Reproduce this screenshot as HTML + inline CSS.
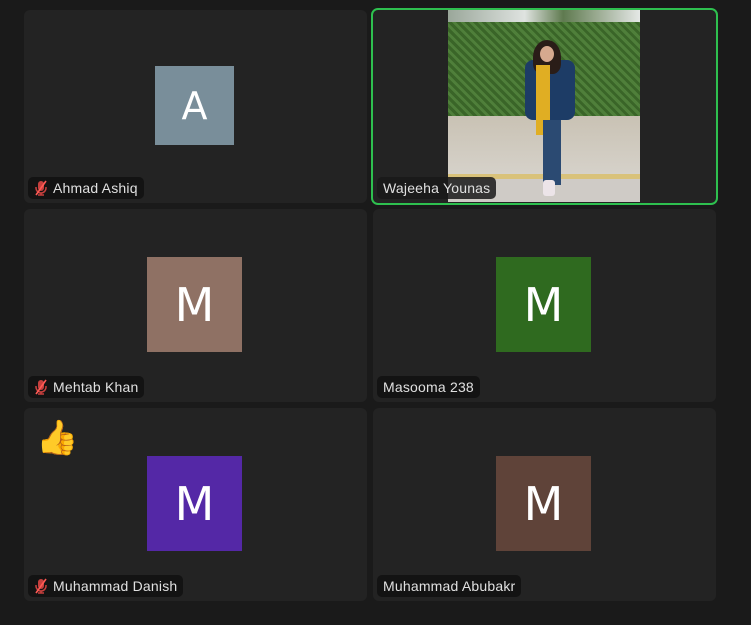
<!DOCTYPE html>
<html><head><meta charset="utf-8"><style>
html,body{margin:0;padding:0;width:751px;height:625px;background:#1a1a1a;overflow:hidden;font-family:"Liberation Sans",sans-serif}
.t{position:absolute;background:#232323;border-radius:6px;width:343px;height:193px}
.av{position:absolute;color:#fff;display:flex;align-items:center;justify-content:center;font-family:"DejaVu Sans","Liberation Sans",sans-serif}
.m{width:95px;height:95px;font-size:46px}
.lb{position:absolute;height:22px;line-height:22px;background:#131313;border-radius:5px;color:#e0e0e0;font-size:14px;letter-spacing:0.2px;padding:0 6px;white-space:nowrap;display:flex;align-items:center}
.lb svg{margin-right:5px}
</style></head><body>
<div class="t" style="left:24px;top:10px"></div>
<div class="t" style="left:373px;top:10px"></div>
<div class="t" style="left:24px;top:209px"></div>
<div class="t" style="left:373px;top:209px"></div>
<div class="t" style="left:24px;top:408px"></div>
<div class="t" style="left:373px;top:408px"></div>

<div style="position:absolute;left:448px;top:10px;width:192px;height:192px;overflow:hidden;background:#d8d4cc">
 <div style="position:absolute;left:0;top:0;width:192px;height:12px;background:linear-gradient(90deg,#9aa79a,#dfe3e0 40%,#5f7a4f 60%,#e5e8e6)"></div>
 <div style="position:absolute;left:0;top:12px;width:192px;height:94px;background:repeating-linear-gradient(45deg,#3a6528 0 3px,#4f7f3a 3px 6px),#44722f"></div>
 <div style="position:absolute;left:0;top:106px;width:192px;height:60px;background:linear-gradient(180deg,#c9c2b4,#d6d2ca)"></div>
 <div style="position:absolute;left:0;top:164px;width:192px;height:5px;background:#d9c27a"></div>
 <div style="position:absolute;left:0;top:169px;width:192px;height:23px;background:#cfcbc6"></div>
 <div style="position:absolute;left:77px;top:50px;width:50px;height:60px;background:#1d3c66;border-radius:8px"></div>
 <div style="position:absolute;left:85px;top:30px;width:28px;height:34px;background:#2a1d18;border-radius:50% 50% 30% 30%"></div>
 <div style="position:absolute;left:92px;top:36px;width:14px;height:16px;background:#d6a98f;border-radius:50%"></div>
 <div style="position:absolute;left:88px;top:55px;width:14px;height:70px;background:#e0ae23"></div>
 <div style="position:absolute;left:95px;top:110px;width:18px;height:65px;background:#2b4a72"></div>
 <div style="position:absolute;left:95px;top:170px;width:12px;height:16px;background:#ece4e8;border-radius:3px"></div>
</div>
<div style="position:absolute;left:371px;top:8px;width:343px;height:193px;border:2px solid #2ec04f;border-radius:7px"></div>

<div class="av" style="left:155px;top:66px;width:79px;height:79px;background:#798e9a;font-size:38px">A</div>
<div class="av m" style="left:147px;top:257px;background:#8f7164">M</div>
<div class="av m" style="left:496px;top:257px;background:#2f6a1f">M</div>
<div class="av m" style="left:147px;top:456px;background:#5428a6">M</div>
<div class="av m" style="left:496px;top:456px;background:#5f4339">M</div>

<div style="position:absolute;left:36px;top:418px;font-size:34px;line-height:40px;font-family:'Noto Color Emoji','DejaVu Sans',sans-serif;color:#f5c02e">👍</div>

<svg width="0" height="0" style="position:absolute"><defs><symbol id="mic" viewBox="0 0 14 16"><rect x="4" y="1" width="6" height="10" rx="3" fill="#c7403e"/><path d="M2 7v1a5 5 0 0 0 10 0V7M7 13v2M4 15h6" stroke="#c7403e" stroke-width="1.5" fill="none"/><path d="M12 1L2 15" stroke="#ff5a55" stroke-width="1.6"/></symbol></defs></svg>

<div class="lb" style="left:28px;top:177px"><svg width="14" height="16"><use href="#mic"/></svg>Ahmad Ashiq</div>
<div class="lb" style="left:377px;top:177px;background:rgba(25,25,25,.85)">Wajeeha Younas</div>
<div class="lb" style="left:28px;top:376px"><svg width="14" height="16"><use href="#mic"/></svg>Mehtab Khan</div>
<div class="lb" style="left:377px;top:376px">Masooma 238</div>
<div class="lb" style="left:28px;top:575px"><svg width="14" height="16"><use href="#mic"/></svg>Muhammad Danish</div>
<div class="lb" style="left:377px;top:575px">Muhammad Abubakr</div>
</body></html>
